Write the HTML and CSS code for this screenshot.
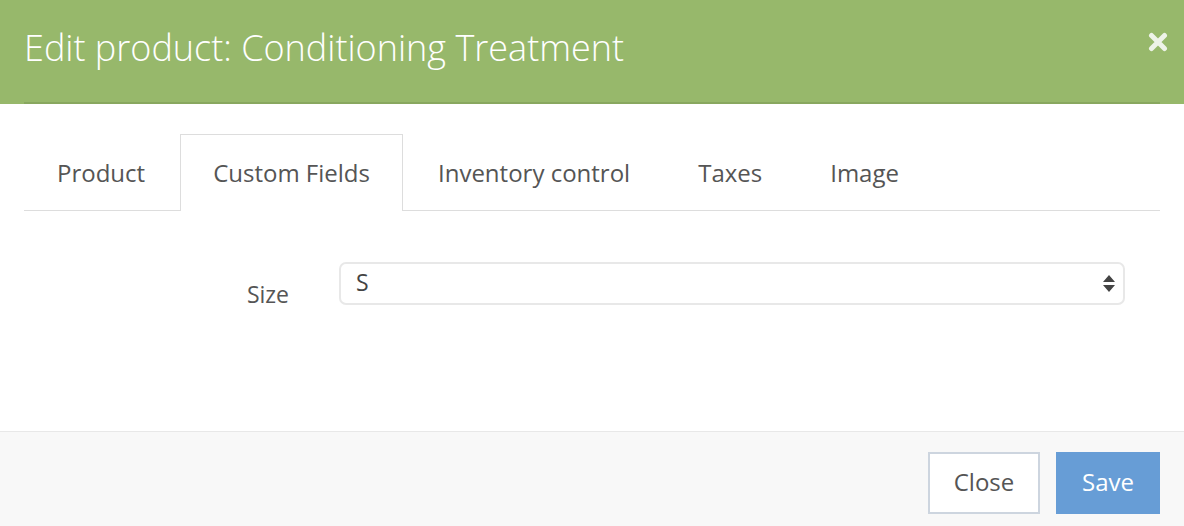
FILE: index.html
```html
<!DOCTYPE html>
<html>
<head>
<meta charset="utf-8">
<link rel="stylesheet" href="styles.css">
</head>
<body>
<div class="modal">
  <div class="modal-header">
    <div class="header-inner">
      <h1 class="title">Edit product: Conditioning Treatment</h1>
    </div>
    <button class="close" aria-label="Close">
      <svg width="20" height="20" viewBox="0 0 20 20"><path d="M3.5 3.5 L16.5 16.5 M16.5 3.5 L3.5 16.5" stroke="#eef3e8" stroke-width="5" stroke-linecap="round"/></svg>
    </button>
  </div>
  <div class="modal-body">
    <ul class="tabs">
      <li class="tab">Product</li>
      <li class="tab active">Custom Fields</li>
      <li class="tab">Inventory control</li>
      <li class="tab">Taxes</li>
      <li class="tab">Image</li>
    </ul>
    <div class="form-row">
      <label class="label">Size</label>
      <div class="select">
        <span class="value">S</span>
        <svg class="arrows" width="12" height="18" viewBox="0 0 12 18"><path d="M6 0 L12 7 L0 7 Z M0 10 L12 10 L6 17 Z" fill="#444"/></svg>
      </div>
    </div>
  </div>
  <div class="modal-footer">
    <button class="btn btn-default">Close</button>
    <button class="btn btn-primary">Save</button>
  </div>
</div>
</body>
</html>
```

FILE: styles.css
```css
html, body {
  margin: 0;
  padding: 0;
  background: #fff;
  font-family: "Open Sans", "Liberation Sans", sans-serif;
}
.modal {
  width: 1184px;
  height: 526px;
  display: flex;
  flex-direction: column;
}
.modal-header {
  position: relative;
  background: #97b86b;
  padding: 0 24px;
  height: 104px;
  flex: none;
}
.header-inner {
  height: 102px;
  border-bottom: 2px solid #88a75f;
  display: flex;
  align-items: center;
}
.title {
  margin: 0;
  color: #fff;
  font-weight: 300;
  font-size: 36px;
  line-height: 1;
  padding-bottom: 6px;
}
.close {
  position: absolute;
  right: 16px;
  top: 32px;
  width: 20px;
  height: 20px;
  padding: 0;
  border: 0;
  background: none;
}
.close svg { display: block; }
.modal-body {
  padding: 30px 24px 0;
  flex: 1;
}
.tabs {
  list-style: none;
  margin: 0;
  padding: 0;
  display: flex;
  border-bottom: 1px solid #dddddd;
}
.tab {
  font-size: 24px;
  color: #555;
  height: 75px;
  line-height: 76px;
  padding: 0 32px;
  border: 1px solid transparent;
  border-bottom: 0;
  margin-right: 2px;
  margin-bottom: -1px;
}
.tab.active {
  border-color: #dddddd;
  background: #fff;
  height: 76px;
}
.form-row {
  display: flex;
  align-items: center;
  margin-top: 54px;
}
.label {
  width: 265px;
  text-align: right;
  font-size: 23px;
  color: #555;
  padding-top: 13px;
}
.select {
  margin-left: 50px;
  width: 786px;
  height: 43px;
  box-sizing: border-box;
  border: 2px solid #e8e8e8;
  border-radius: 7px;
  display: flex;
  align-items: center;
  justify-content: space-between;
  padding: 0 8px 0 15px;
  margin-top: -8px;
}
.value {
  font-size: 23px;
  color: #444;
  padding-bottom: 3px;
}
.arrows { display: block; }
.modal-footer {
  height: 95px;
  flex: none;
  border-top: 1px solid #e8e8e8;
  background: #f8f8f8;
  display: flex;
  justify-content: flex-end;
  align-items: flex-start;
  gap: 16px;
  padding: 20px 24px 0;
  box-sizing: border-box;
}
.btn {
  font-family: "Open Sans", "Liberation Sans", sans-serif;
  font-size: 24px;
  height: 62px;
  padding: 0 0 3px;
  cursor: pointer;
}
.btn-default {
  width: 112px;
  background: #fff;
  color: #555;
  border: 2px solid #cdd5df;
}
.btn-primary {
  width: 104px;
  background: #679dd6;
  color: #fff;
  border: 0;
}
```
